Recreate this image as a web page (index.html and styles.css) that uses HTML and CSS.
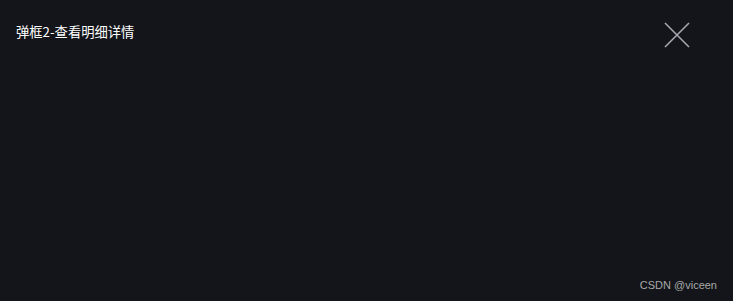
FILE: index.html
```html
<!DOCTYPE html>
<html lang="zh">
<head>
    <meta charset="UTF-8">
    <title>弹框2-查看明细详情</title>
    <link rel="stylesheet" href="styles.css">
</head>
<body>
    <div class="dialog">
        <div class="dialog-header">
            <span class="dialog-title">弹框2-查看明细详情</span>
            <button class="dialog-close" aria-label="close">
                <svg width="26" height="26" viewBox="0 0 26 26">
                    <path d="M1 1 L25 25 M25 1 L1 25" stroke="#a3a7ae" stroke-width="1.6" fill="none"/>
                </svg>
            </button>
        </div>
        <div class="dialog-body"></div>
        <div class="watermark">CSDN @viceen</div>
    </div>
</body>
</html>
```

FILE: styles.css
```css
html, body {
    margin: 0;
    padding: 0;
    height: 100%;
    background-color: #13151a;
}
.dialog {
    height: 100%;
    display: flex;
    flex-direction: column;
    font-family: "Noto Sans CJK SC", "Liberation Sans", sans-serif;
}
.dialog-header {
    display: flex;
    align-items: flex-start;
    justify-content: space-between;
    padding: 22px 43px 0 16px;
    height: 26px;
}
.dialog-title {
    color: #ffffff;
    font-size: 13.3px;
    line-height: 20px;
}
.dialog-close {
    background: none;
    border: 0;
    padding: 0;
    width: 26px;
    height: 26px;
    cursor: pointer;
    display: block;
}
.dialog-close svg { display: block; }
.dialog-body { flex: 1; }
.watermark {
    align-self: flex-end;
    color: #a8a8a8;
    font-family: "Liberation Sans", Arial, sans-serif;
    font-size: 11px;
    padding: 0 16px 10px 0;
}
```
